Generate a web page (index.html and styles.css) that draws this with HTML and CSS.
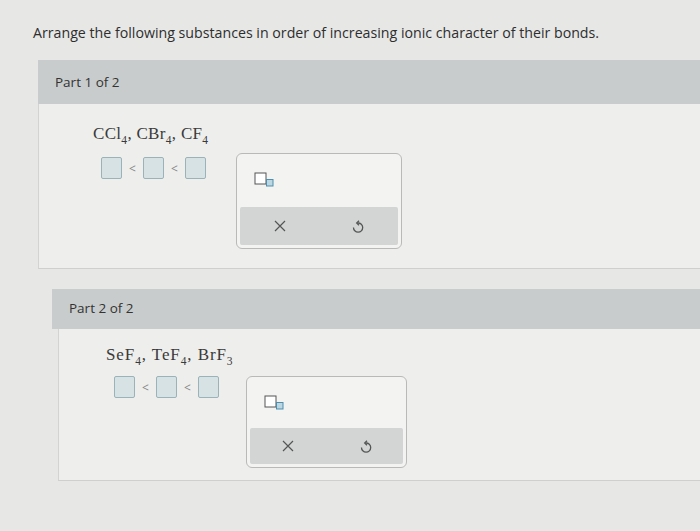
FILE: index.html
```html
<!DOCTYPE html>
<html>
<head>
<meta charset="utf-8">
<link rel="stylesheet" href="styles.css">
</head>
<body>
<div class="page">
  <p class="question">Arrange the following substances in order of increasing ionic character of their bonds.</p>

  <section class="part part-one">
    <div class="part-head">Part 1 of 2</div>
    <div class="part-body">
      <div class="work">
        <div class="formula">CCl<sub>4</sub>, CBr<sub>4</sub>, CF<sub>4</sub></div>
        <div class="order">
          <span class="slot"></span><span class="lt">&lt;</span><span class="slot"></span><span class="lt">&lt;</span><span class="slot"></span>
        </div>
      </div>
      <div class="panel">
        <div class="panel-top">
          <svg class="sub-icon" width="22" height="16" viewBox="0 0 22 16">
            <rect x="1" y="1" width="11" height="11" fill="#fff" stroke="#555" stroke-width="1"/>
            <rect x="12.5" y="7.5" width="6.5" height="6.5" fill="#bcd6e2" stroke="#4f8fad" stroke-width="1"/>
          </svg>
        </div>
        <div class="panel-bar">
          <svg width="14" height="14" viewBox="0 0 14 14"><path d="M2 2 L12 12 M12 2 L2 12" stroke="#555" stroke-width="1.2" fill="none"/></svg>
          <svg width="14" height="15" viewBox="0 0 14 15"><path d="M7 4 A4.6 4.6 0 1 1 2.5 8.5" stroke="#555" stroke-width="1.3" fill="none"/><path d="M8 1.8 L5.7 4 L8 6.2" stroke="#555" stroke-width="1.3" fill="none"/></svg>
        </div>
      </div>
    </div>
  </section>

  <section class="part part-two">
    <div class="part-head">Part 2 of 2</div>
    <div class="part-body">
      <div class="work">
        <div class="formula">SeF<sub>4</sub>, TeF<sub>4</sub>, BrF<sub>3</sub></div>
        <div class="order">
          <span class="slot"></span><span class="lt">&lt;</span><span class="slot"></span><span class="lt">&lt;</span><span class="slot"></span>
        </div>
      </div>
      <div class="panel">
        <div class="panel-top">
          <svg class="sub-icon" width="22" height="16" viewBox="0 0 22 16">
            <rect x="1" y="1" width="11" height="11" fill="#fff" stroke="#555" stroke-width="1"/>
            <rect x="12.5" y="7.5" width="6.5" height="6.5" fill="#bcd6e2" stroke="#4f8fad" stroke-width="1"/>
          </svg>
        </div>
        <div class="panel-bar">
          <svg width="14" height="14" viewBox="0 0 14 14"><path d="M2 2 L12 12 M12 2 L2 12" stroke="#555" stroke-width="1.2" fill="none"/></svg>
          <svg width="14" height="15" viewBox="0 0 14 15"><path d="M7 4 A4.6 4.6 0 1 1 2.5 8.5" stroke="#555" stroke-width="1.3" fill="none"/><path d="M8 1.8 L5.7 4 L8 6.2" stroke="#555" stroke-width="1.3" fill="none"/></svg>
        </div>
      </div>
    </div>
  </section>
</div>
</body>
</html>
```

FILE: styles.css
```css
html, body {
  margin: 0;
  padding: 0;
}
body {
  background: #e7e7e6;
  font-family: "Open Sans", "DejaVu Sans", sans-serif;
  color: #333;
  width: 700px;
  height: 531px;
  overflow: hidden;
}
.page {
  padding-top: 23px;
}
.question {
  margin: 0 0 0 33px;
  font-size: 14.2px;
  line-height: 19px;
  color: #2e2e2e;
  white-space: nowrap;
}
.part {
  box-sizing: border-box;
}
.part-one {
  margin: 18px 0 0 38px;
}
.part-two {
  margin: 20px 0 0 52px;
}
.part-head {
  background: #c8cccc;
  font-size: 13.5px;
  color: #333;
  height: 44px;
  line-height: 44px;
  padding-left: 17px;
}
.part-two .part-head {
  height: 40px;
  line-height: 38px;
}
.part-body {
  background: #eeeeec;
  border-left: 1px solid #d3d3d2;
  border-bottom: 1px solid #cfcfce;
  display: flex;
  align-items: flex-start;
  height: 165px;
  box-sizing: border-box;
}
.part-two .part-body {
  height: 152px;
  margin-left: 6px;
}
.work {
  margin-left: 54px;
  margin-top: 19px;
  width: 143px;
}
.part-two .work {
  margin-left: 47px;
  margin-top: 15px;
  width: 140px;
}
.formula {
  font-family: "Liberation Serif", "Times New Roman", serif;
  font-size: 17px;
  letter-spacing: 0.3px;
  color: #3a3a3a;
  line-height: 22px;
  white-space: nowrap;
}
.part-two .formula {
  letter-spacing: 0.9px;
}
.formula sub {
  font-size: 11.5px;
  vertical-align: -5px;
  line-height: 0;
}
.order {
  display: flex;
  align-items: center;
  margin-top: 12px;
  margin-left: 8px;
}
.part-two .order {
  margin-top: 10px;
}
.slot {
  width: 21px;
  height: 22px;
  box-sizing: border-box;
  background: #d7e2e4;
  border: 1.5px solid #9bb3b8;
  border-radius: 2px;
}
.lt {
  font-size: 12px;
  color: #888;
  width: 21px;
  text-align: center;
}
.part-one .lt:last-of-type {
  width: 23px;
}
.panel {
  margin-top: 49px;
  width: 166px;
  height: 96px;
  box-sizing: border-box;
  background: #f3f3f2;
  border: 1.5px solid #b9b9b8;
  border-radius: 6px;
  padding: 3px;
  display: flex;
  flex-direction: column;
}
.part-two .panel {
  margin-top: 47px;
  width: 161px;
  height: 92px;
}
.panel-top {
  flex: 1;
  padding: 14px 0 0 14px;
}
.panel-bar {
  height: 38px;
  background: #d3d5d5;
  border-radius: 2px;
  display: flex;
  align-items: center;
  justify-content: center;
  gap: 64px;
}
.part-two .panel-bar {
  height: 36px;
}
```
